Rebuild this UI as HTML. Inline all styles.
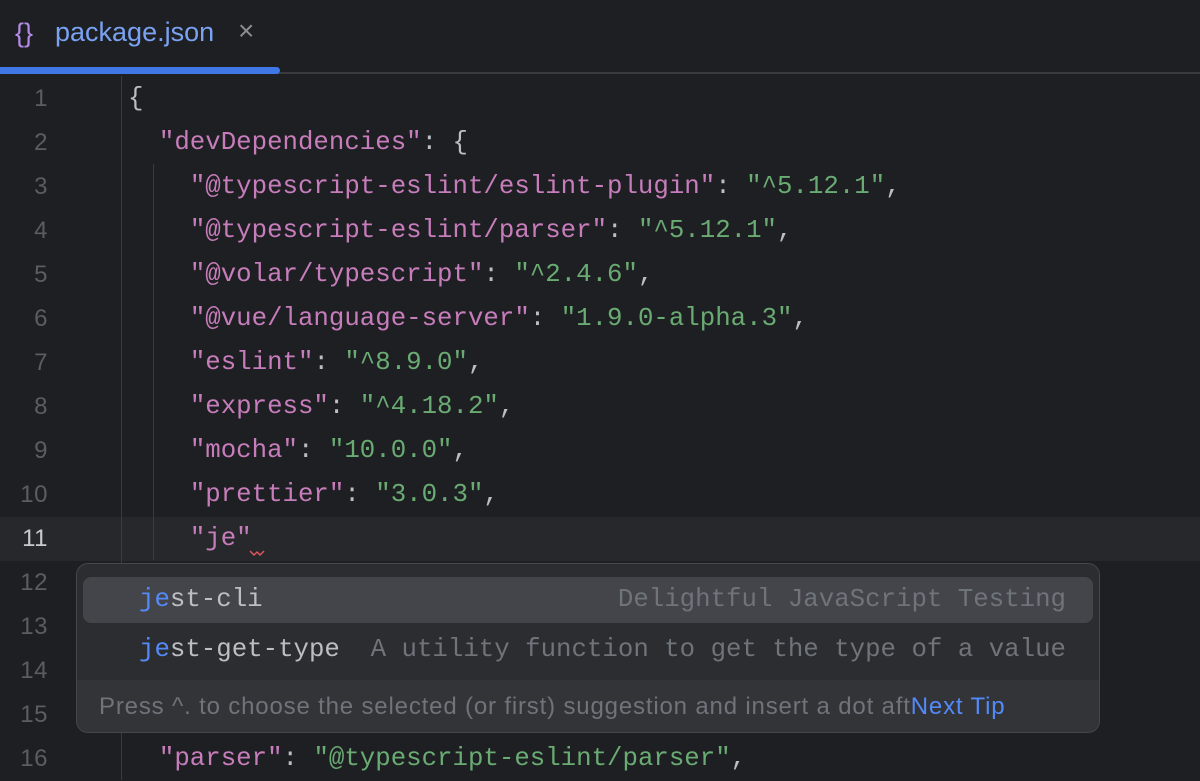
<!DOCTYPE html>
<html><head><meta charset="utf-8"><style>
body{margin:0;width:1200px;height:780px;background:#1e1f22;overflow:hidden;position:relative;font-family:"Liberation Mono",monospace}
.tab{position:absolute;left:0;top:0;height:74px;width:1200px;border-bottom:2px solid #393b40;box-sizing:border-box}
.ln{position:absolute;left:0;width:48px;text-align:right;color:#5a5d63;font-size:24px;height:44px;line-height:44px;font-family:"Liberation Sans",sans-serif;letter-spacing:0.5px}
.code{position:absolute;left:128px;height:44px;line-height:44px;font-size:25.75px;color:#bcbec4;white-space:pre}
.k{color:#c77dbb}.s{color:#6aab73}
.popup{position:absolute;left:76px;top:563px;width:1024px;height:170px;background:#2b2d30;border:1px solid #45474c;border-radius:12px;box-sizing:border-box;overflow:hidden}
.row{position:absolute;left:6px;right:6px;height:46px;line-height:46px;font-size:25.75px;color:#bcbec4;white-space:pre;border-radius:8px}
.b{color:#548af7}.g{color:#6f737a}
</style></head><body>
<div class="tab">
<div style="position:absolute;left:15px;top:18px;color:#b48ae8;font-size:27px;font-family:'Liberation Sans',sans-serif">{}</div>
<div style="position:absolute;left:55px;top:17px;color:#7aa2f2;font-size:27px;font-family:'Liberation Sans',sans-serif">package.json</div>
<div style="position:absolute;left:238px;top:15px;color:#8a8c91;font-size:28px;font-family:'Liberation Sans',sans-serif">×</div>
<div style="position:absolute;left:0;top:67px;width:280px;height:7px;background:#3f77e6;border-radius:0 4px 4px 0"></div>
</div>
<div style="position:absolute;left:0;top:517px;width:1200px;height:44px;background:#26282c"></div>
<div style="position:absolute;left:121px;top:76px;width:1px;height:704px;background:#393b40"></div>
<div style="position:absolute;left:153px;top:164px;width:1px;height:396px;background:#393b40"></div>
<div class="ln" style="top:77px">1</div>
<div class="ln" style="top:121px">2</div>
<div class="ln" style="top:165px">3</div>
<div class="ln" style="top:209px">4</div>
<div class="ln" style="top:253px">5</div>
<div class="ln" style="top:297px">6</div>
<div class="ln" style="top:341px">7</div>
<div class="ln" style="top:385px">8</div>
<div class="ln" style="top:429px">9</div>
<div class="ln" style="top:473px">10</div>
<div class="ln" style="top:517px;color:#c9cbd0">11</div>
<div class="ln" style="top:561px">12</div>
<div class="ln" style="top:605px">13</div>
<div class="ln" style="top:649px">14</div>
<div class="ln" style="top:693px">15</div>
<div class="ln" style="top:737px">16</div>
<div class="code" style="top:77px">{</div>
<div class="code" style="top:121px">  <span class="k">"devDependencies"</span>: {</div>
<div class="code" style="top:165px">    <span class="k">"@typescript-eslint/eslint-plugin"</span>: <span class="s">"^5.12.1"</span>,</div>
<div class="code" style="top:209px">    <span class="k">"@typescript-eslint/parser"</span>: <span class="s">"^5.12.1"</span>,</div>
<div class="code" style="top:253px">    <span class="k">"@volar/typescript"</span>: <span class="s">"^2.4.6"</span>,</div>
<div class="code" style="top:297px">    <span class="k">"@vue/language-server"</span>: <span class="s">"1.9.0-alpha.3"</span>,</div>
<div class="code" style="top:341px">    <span class="k">"eslint"</span>: <span class="s">"^8.9.0"</span>,</div>
<div class="code" style="top:385px">    <span class="k">"express"</span>: <span class="s">"^4.18.2"</span>,</div>
<div class="code" style="top:429px">    <span class="k">"mocha"</span>: <span class="s">"10.0.0"</span>,</div>
<div class="code" style="top:473px">    <span class="k">"prettier"</span>: <span class="s">"3.0.3"</span>,</div>
<div class="code" style="top:517px">    <span class="k">"je"</span></div>
<svg style="position:absolute;left:249px;top:550px" width="16" height="6"><path d="M1 1 L5 5 L8 2 L11 5 L15 1" stroke="#e0545c" stroke-width="1.5" fill="none"/></svg>
<div class="code" style="top:737px">  <span class="k">"parser"</span>: <span class="s">"@typescript-eslint/parser"</span>,</div>
<div class="popup">
<div class="row" style="top:13px;background:#43454a"><span style="position:absolute;left:56px"><span class="b">je</span>st-cli</span><span class="g" style="position:absolute;right:27px">Delightful JavaScript Testing</span></div>
<div class="row" style="top:63px"><span style="position:absolute;left:56px"><span class="b">je</span>st-get-type</span><span class="g" style="position:absolute;right:27px">A utility function to get the type of a value</span></div>
<div style="position:absolute;left:0;right:0;top:116px;bottom:0;background:#323438"></div>
<div style="position:absolute;left:22px;top:129px;font-family:'Liberation Sans',sans-serif;font-size:24px;letter-spacing:0.83px;color:#6f737a;white-space:pre">Press ^. to choose the selected (or first) suggestion and insert a dot aft<span class="b">Next Tip</span></div>
</div>
</body></html>
